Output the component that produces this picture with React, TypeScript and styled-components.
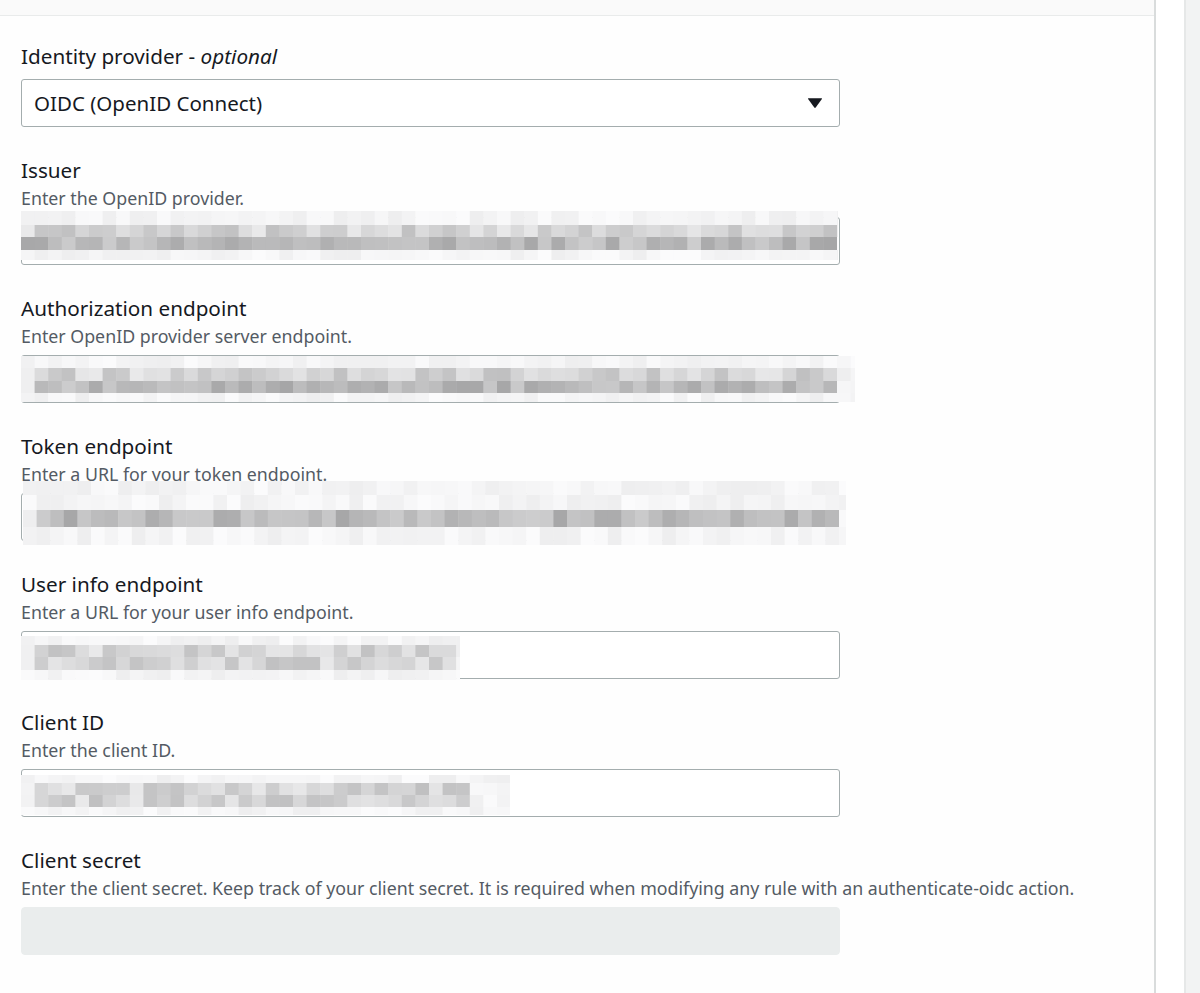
import React from "react";
import styled, { createGlobalStyle } from "styled-components";

const Global = createGlobalStyle`
  html, body { margin: 0; padding: 0; background: #ffffff; }
  body { font-family: "Noto Sans", "Open Sans", Arial, sans-serif; }
`;

const Shell = styled.div`
  display: flex;
  width: 1200px;
  height: 993px;
  overflow: hidden;
  background: #ffffff;
`;

const Main = styled.div`
  width: 1154px;
  border-right: 2px solid #d9dcdc;
  display: flex;
  flex-direction: column;
  background: #fefefe;
`;

const TopBar = styled.div`
  height: 15px;
  background: #fafafa;
  border-bottom: 1px solid #e9ebeb;
  flex-shrink: 0;
`;

const Gutter = styled.div`
  width: 28px;
  border-right: 2px solid #e6e8e8;
  background: #ffffff;
`;

const Track = styled.div`
  flex: 1;
  background: #f2f3f3;
`;

const Form = styled.div`
  display: flex;
  flex-direction: column;
  gap: 29px;
  padding: 26px 0 0 21px;
  width: 819px;
`;

const Field = styled.div`
  display: flex;
  flex-direction: column;
`;

const Label = styled.div`
  font-size: 20.7px;
  line-height: 28px;
  color: #16191f;
  white-space: nowrap;
`;

const Optional = styled.span`
  font-style: italic;
`;

const Desc = styled.div`
  font-size: 17.8px;
  line-height: 28px;
  color: #545b64;
  white-space: nowrap;
`;

const InputWrap = styled.div<{ $gap: number }>`
  position: relative;
  margin-top: ${(p) => p.$gap}px;
`;

const Input = styled.div<{ $disabled?: boolean }>`
  box-sizing: border-box;
  height: 48px;
  width: 819px;
  border-radius: ${(p) => (p.$disabled ? "4px" : "3px")};
  border: 1px solid ${(p) => (p.$disabled ? "#eaeded" : "#a4adae")};
  background: ${(p) => (p.$disabled ? "#eaeded" : "#ffffff")};
`;

const Select = styled.div`
  box-sizing: border-box;
  height: 48px;
  width: 819px;
  border-radius: 3px;
  border: 1px solid #a4adae;
  background: #ffffff;
  display: flex;
  align-items: center;
  justify-content: space-between;
  padding: 0 16px 0 12px;
  font-size: 20.5px;
  color: #16191f;
`;

const Caret = styled.svg`
  width: 16px;
  height: 12px;
  display: block;
`;

const MosaicSvg = styled.svg`
  position: absolute;
  display: block;
  pointer-events: none;
`;

type Row = { h: number; tone: "light" | "mid" | "dark" };

type MosaicProps = {
  left: number;
  top: number;
  width: number;
  grayFrom: number;
  grayTo: number;
  rows: Row[];
  seed: number;
};

function rng(seed: number) {
  let s = seed >>> 0;
  return () => {
    s = (s * 1664525 + 1013904223) >>> 0;
    return s / 4294967296;
  };
}

const CELL = 13.6;

function Mosaic({ left, top, width, grayFrom, grayTo, rows, seed }: MosaicProps) {
  const rand = rng(seed);
  const height = rows.reduce((a, r) => a + r.h, 0);
  const rects: React.ReactNode[] = [];
  let y = 0;
  const cols = Math.ceil(width / CELL);
  rows.forEach((row, ri) => {
    for (let c = 0; c < cols; c++) {
      const x = c * CELL;
      const inGray = x + CELL / 2 >= grayFrom && x + CELL / 2 <= grayTo;
      let v: number;
      if (!inGray || row.tone === "light") {
        v = 238 + Math.floor(rand() * 14);
      } else if (row.tone === "mid") {
        v = 192 + Math.floor(rand() * 42);
      } else {
        v = 166 + Math.floor(rand() * 40);
      }
      const col = `rgb(${v},${v},${v + 1})`;
      rects.push(
        <rect key={`${ri}-${c}`} x={x} y={y} width={CELL + 0.5} height={row.h} fill={col} />
      );
    }
    y += row.h;
  });
  return (
    <MosaicSvg
      style={{ left, top }}
      width={width}
      height={height}
      viewBox={`0 0 ${width} ${height}`}
    >
      {rects}
    </MosaicSvg>
  );
}

type FieldData = {
  label: string;
  desc: string;
  mosaic?: MosaicProps;
  disabled?: boolean;
};

const fields: FieldData[] = [
  {
    label: "Issuer",
    desc: "Enter the OpenID provider.",
    mosaic: {
      left: 0,
      top: -6,
      width: 817,
      grayFrom: 6,
      grayTo: 810,
      rows: [
        { h: 14, tone: "light" },
        { h: 12, tone: "mid" },
        { h: 13, tone: "dark" },
        { h: 10, tone: "light" },
      ],
      seed: 11,
    },
  },
  {
    label: "Authorization endpoint",
    desc: "Enter OpenID provider server endpoint.",
    mosaic: {
      left: 0,
      top: 1,
      width: 834,
      grayFrom: 12,
      grayTo: 812,
      rows: [
        { h: 12, tone: "light" },
        { h: 13, tone: "mid" },
        { h: 12, tone: "dark" },
        { h: 9, tone: "light" },
      ],
      seed: 27,
    },
  },
  {
    label: "Token endpoint",
    desc: "Enter a URL for your token endpoint.",
    mosaic: {
      left: 2,
      top: -12,
      width: 823,
      grayFrom: 8,
      grayTo: 812,
      rows: [
        { h: 14, tone: "light" },
        { h: 15, tone: "light" },
        { h: 17, tone: "dark" },
        { h: 18, tone: "light" },
      ],
      seed: 43,
    },
  },
  {
    label: "User info endpoint",
    desc: "Enter a URL for your user info endpoint.",
    mosaic: {
      left: 0,
      top: 5,
      width: 439,
      grayFrom: 12,
      grayTo: 432,
      rows: [
        { h: 9, tone: "light" },
        { h: 12, tone: "mid" },
        { h: 13, tone: "mid" },
        { h: 10, tone: "light" },
      ],
      seed: 59,
    },
  },
  {
    label: "Client ID",
    desc: "Enter the client ID.",
    mosaic: {
      left: 0,
      top: 6,
      width: 489,
      grayFrom: 12,
      grayTo: 452,
      rows: [
        { h: 8, tone: "light" },
        { h: 12, tone: "mid" },
        { h: 12, tone: "mid" },
        { h: 8, tone: "light" },
      ],
      seed: 71,
    },
  },
  {
    label: "Client secret",
    desc:
      "Enter the client secret. Keep track of your client secret. It is required when modifying any rule with an authenticate-oidc action.",
    disabled: true,
  },
];

export default function App() {
  return (
    <>
      <Global />
      <Shell>
        <Main>
          <TopBar />
          <Form>
            <Field>
              <Label>
                Identity provider - <Optional>optional</Optional>
              </Label>
              <InputWrap $gap={9}>
                <Select>
                  <span>OIDC (OpenID Connect)</span>
                  <Caret viewBox="0 0 16 12">
                    <path
                      d="M1.5 1.2 L14.5 1.2 Q15.4 1.2 14.9 2 L8.7 10.6 Q8 11.5 7.3 10.6 L1.1 2 Q0.6 1.2 1.5 1.2 Z"
                      fill="#16191f"
                    />
                  </Caret>
                </Select>
              </InputWrap>
            </Field>
            {fields.map((f) => (
              <Field key={f.label}>
                <Label>{f.label}</Label>
                <Desc>{f.desc}</Desc>
                <InputWrap $gap={5}>
                  <Input $disabled={f.disabled} />
                  {f.mosaic && <Mosaic {...f.mosaic} />}
                </InputWrap>
              </Field>
            ))}
          </Form>
        </Main>
        <Gutter />
        <Track />
      </Shell>
    </>
  );
}
